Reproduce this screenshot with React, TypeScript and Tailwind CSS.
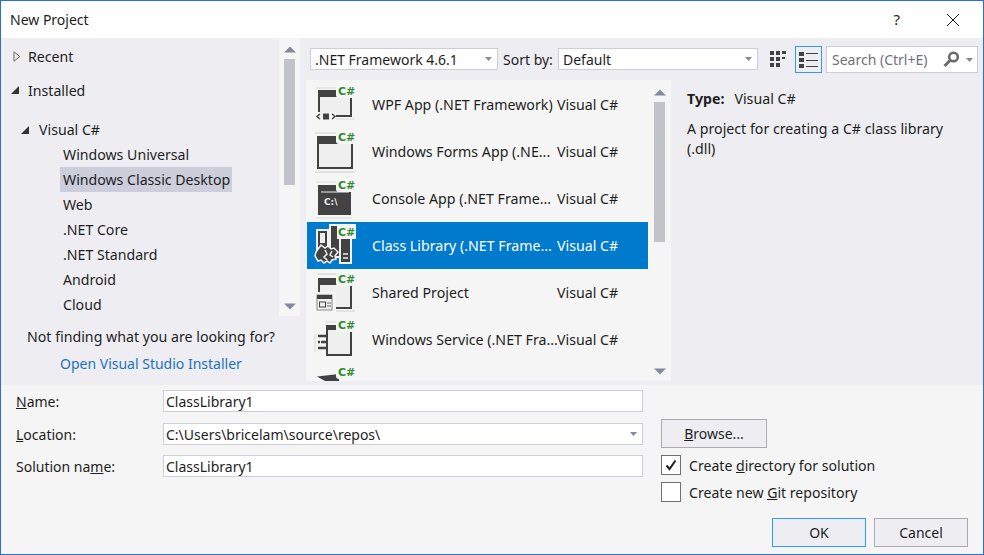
import React from "react";

const FONT = "font-['Noto_Sans','Open_Sans',sans-serif]";

function CSharp({ y = 13, x = 25 }: { y?: number; x?: number }) {
  return (
    <>
      <rect x={x - 2} y={y - 12} width="19" height="14" rx="3" fill="#f5f5f5" />
      <text x={x} y={y - 1} fontFamily="'DejaVu Sans',sans-serif" fontWeight="700" fontSize="11" fill="#2f8a2f">
        C#
      </text>
    </>
  );
}

function WpfIcon() {
  return (
    <svg width="44" height="44" viewBox="0 0 44 44" className="shrink-0">
      <path d="M3 5h22M8 36h34" stroke="#d8d8d8" fill="none" />
      <rect x="6" y="8" width="32" height="25" fill="#efefef" stroke="#424242" strokeWidth="2" />
      <rect x="5" y="7" width="23" height="7" fill="#424242" />
      <rect x="3" y="29" width="20" height="9" fill="#f5f5f5" />
      <path d="M7 31l-3 2.500 3 2.500M19 31l3 2.500-3 2.500" stroke="#424242" strokeWidth="1.500" fill="none" />
      <rect x="10" y="30.500" width="6" height="6" fill="#424242" />
      <CSharp />
    </svg>
  );
}

function FormsIcon() {
  return (
    <svg width="44" height="44" viewBox="0 0 44 44" className="shrink-0">
      <path d="M2 3h24M2 42h40" stroke="#d0d0d0" fill="none" />
      <rect x="5" y="7" width="34" height="31" fill="#efefef" stroke="#424242" strokeWidth="2" />
      <rect x="4" y="6" width="24" height="8" fill="#424242" />
      <CSharp y={12} />
    </svg>
  );
}

function ConsoleIcon() {
  return (
    <svg width="44" height="44" viewBox="0 0 44 44" className="shrink-0">
      <path d="M3 5h24M3 41h36" stroke="#dcdcdc" fill="none" />
      <rect x="5" y="8" width="33" height="30" fill="#424242" />
      <path d="M8 15h28" stroke="#efefef" />
      <text x="11" y="28" fontFamily="'DejaVu Sans',sans-serif" fontWeight="700" fontSize="9" fill="#efefef">
        C:\
      </text>
      <CSharp />
    </svg>
  );
}

function ClassIcon() {
  return (
    <svg width="44" height="44" viewBox="0 0 44 44" className="shrink-0">
      <rect x="3" y="5" width="13" height="26" fill="#f2f2f2" />
      <rect x="5" y="7" width="9" height="22" fill="#424242" />
      <rect x="7" y="9" width="5" height="10" fill="#efefef" />
      <rect x="16" y="0" width="12" height="34" fill="#f2f2f2" />
      <rect x="18" y="2" width="8" height="30" fill="#424242" />
      <rect x="26" y="7" width="13" height="33" fill="#f2f2f2" />
      <rect x="28" y="9" width="9" height="29" fill="#424242" />
      <path d="M30 30h5M30 34h5" stroke="#efefef" strokeWidth="1.500" />
      <path
        d="M3 28l5-7 4 3 3-2 3 3 3-1 4 4-3 4 1 3-4 1-2 3-3-2-3 2-3-3-3 1-3-5z"
        fill="#424242"
        stroke="#f2f2f2"
        strokeWidth="1.500"
      />
      <path d="M12 26l2 4-3 3 3 3M19 27l-2 4 3 2" stroke="#f2f2f2" strokeWidth="1.500" fill="none" />
      <rect x="24" y="0" width="19" height="15" fill="#f5f5f5" />
      <text x="25" y="12" fontFamily="'DejaVu Sans',sans-serif" fontWeight="700" fontSize="11" fill="#2f8a2f">
        C#
      </text>
    </svg>
  );
}

function SharedIcon() {
  return (
    <svg width="44" height="44" viewBox="0 0 44 44" className="shrink-0">
      <path d="M4 3h22M4 40h38" stroke="#d0d0d0" fill="none" />
      <rect x="6" y="8" width="32" height="29" fill="#efefef" stroke="#424242" strokeWidth="2" />
      <rect x="5" y="7" width="24" height="7" fill="#424242" />
      <rect x="2" y="21" width="21" height="20" fill="#f5f5f5" />
      <rect x="4" y="24" width="15" height="15" fill="#efefef" stroke="#8a8a8a" />
      <rect x="4" y="24" width="15" height="4" fill="#424242" />
      <rect x="6.500" y="31" width="6" height="5" fill="none" stroke="#424242" />
      <path d="M14 32h4M14 35h4" stroke="#6a6a6a" />
      <CSharp />
    </svg>
  );
}

function ServiceIcon() {
  return (
    <svg width="44" height="44" viewBox="0 0 44 44" className="shrink-0">
      <path d="M12 4h18M2 16v18" stroke="#d8d8d8" fill="none" />
      <rect x="14" y="8" width="24" height="29" fill="#efefef" stroke="#424242" strokeWidth="2" />
      <rect x="13" y="7" width="17" height="5" fill="#424242" />
      <path d="M5 18h8M5 24h2M8 24h5M5 30h8" stroke="#424242" strokeWidth="2.500" />
      <CSharp y={12} />
    </svg>
  );
}

function LastIcon() {
  return (
    <svg width="44" height="44" viewBox="0 0 44 44" className="shrink-0">
      <path d="M4 11.500L26 9v7H12z" fill="#424242" />
      <CSharp y={12} />
    </svg>
  );
}

const templates: [string, React.ReactNode][] = [
  ["WPF App (.NET Framework)", <WpfIcon />],
  ["Windows Forms App (.NE...", <FormsIcon />],
  ["Console App (.NET Frame...", <ConsoleIcon />],
  ["Class Library (.NET Frame...", <ClassIcon />],
  ["Shared Project", <SharedIcon />],
  ["Windows Service (.NET Fra...", <ServiceIcon />],
  ["", <LastIcon />],
];

const children = ["Windows Universal", "Windows Classic Desktop", "Web", ".NET Core", ".NET Standard", "Android", "Cloud"];

function Caret() {
  return (
    <svg width="7" height="4" viewBox="0 0 7 4" className="shrink-0">
      <path d="M0 0h7L3.500 4z" fill="#868999" />
    </svg>
  );
}

function ScrollBar({ thumbH, className }: { thumbH: string; className: string }) {
  return (
    <div className={`flex flex-col items-center ${className}`}>
      <svg width="12" height="7" viewBox="0 0 12 7" className="mt-[8px] shrink-0">
        <path d="M0 6.500h12L6 0.500z" fill="#868999" />
      </svg>
      <div className={`mt-[6px] w-[11px] bg-[#c2c3c9] ${thumbH}`} />
      <div className="flex-1" />
      <svg width="12" height="7" viewBox="0 0 12 7" className="mb-[6px] shrink-0">
        <path d="M0 .5h12L6 6.500z" fill="#868999" />
      </svg>
    </div>
  );
}

function Field({ value, caret }: { value: string; caret?: boolean }) {
  return (
    <div className="flex h-[22px] w-[480px] items-center border border-[#cccedb] bg-white pl-[2px] pr-[5px] text-[14px] text-[#1e1e1e]">
      <span className="flex-1 whitespace-nowrap">{value}</span>
      {caret && <Caret />}
    </div>
  );
}

function FormRow({ children, field }: { children: React.ReactNode; field: React.ReactNode }) {
  return (
    <div className="flex h-[22px] items-center">
      <span className="w-[147px] whitespace-nowrap text-[14px] text-[#1e1e1e]">{children}</span>
      {field}
    </div>
  );
}

function Check({ checked, children }: { checked?: boolean; children: React.ReactNode }) {
  return (
    <div className="flex h-[20px] items-center gap-[8px] text-[14.1px] text-[#1e1e1e]">
      <span className="flex h-[20px] w-[20px] items-center justify-center border border-[#707070] bg-white">
        {checked && (
          <svg width="12" height="12" viewBox="0 0 12 12">
            <path d="M1.500 6.500L4.500 10 10.500 1.500" stroke="#1e1e1e" strokeWidth="2" fill="none" />
          </svg>
        )}
      </span>
      <span className="whitespace-nowrap pt-[2px]">{children}</span>
    </div>
  );
}

export default function App() {
  return (
    <div className={`flex h-[555px] w-[984px] flex-col overflow-hidden border border-[#2b6fd6] bg-[#f5f5f5] text-[#1e1e1e] ${FONT}`}>
      {/* Title bar */}
      <div className="flex h-[37px] shrink-0 items-center bg-white pl-[9px] text-[14px]">
        <span className="flex-1">New Project</span>
        <span className="mr-[46px] text-[15px]">?</span>
        <svg width="14" height="14" viewBox="0 0 14 14" className="mr-[23px]">
          <path d="M1 1l12 12M13 1L1 13" stroke="#1e1e1e" strokeWidth="1" fill="none" />
        </svg>
      </div>

      {/* Main */}
      <div className="flex h-[347px] shrink-0 bg-[#eeeef2]">
        {/* Left */}
        <div className="flex w-[299px] shrink-0 flex-col">
          <div className="flex h-[279px] shrink-0">
            <div className="flex w-[278px] flex-col pt-[2px] text-[14.15px]">
              <div className="flex h-[34px] items-center">
                <svg width="8" height="11" viewBox="0 0 8 11" className="ml-[12px] mr-[7px] shrink-0">
                  <path d="M1 .8L6.800 5.500 1 10.200z" fill="none" stroke="#6a6a6a" />
                </svg>
                <span>Recent</span>
              </div>
              <div className="flex h-[34px] items-center">
                <svg width="8" height="8" viewBox="0 0 8 8" className="ml-[10px] mr-[9px] shrink-0">
                  <path d="M8 0v8H0z" fill="#333337" />
                </svg>
                <span>Installed</span>
              </div>
              <div className="mt-[10px] flex h-[25px] items-center">
                <svg width="8" height="8" viewBox="0 0 8 8" className="ml-[20px] mr-[10px] shrink-0">
                  <path d="M8 0v8H0z" fill="#333337" />
                </svg>
                <span>Visual C#</span>
              </div>
              {children.map((c) => (
                <div key={c} className="flex h-[25px] items-center pl-[59px]">
                  <span
                    className={`flex h-[25px] items-center whitespace-nowrap pl-[3px] pr-[2px] ${
                      c === "Windows Classic Desktop" ? "bg-[#cccedb]" : ""
                    }`}
                  >
                    {c}
                  </span>
                </div>
              ))}
            </div>
            <ScrollBar className="h-[278px] w-[21px] bg-[#f5f5f5]" thumbH="h-[126px]" />
          </div>
          <div className="pl-[26px] pt-[9px] text-[14.2px]">Not finding what you are looking for?</div>
          <div className="pl-[59px] pt-[6px] text-[14px] text-[#1b72c0]">Open Visual Studio Installer</div>
        </div>

        {/* Center & right */}
        <div className="flex min-w-0 flex-1 flex-col pl-[6px]">
          <div className="flex h-[42px] shrink-0 items-start pl-[4px] pt-[8px] text-[14px]">
            <div className="mt-[2px] flex h-[22px] w-[188px] items-center border border-[#cccedb] bg-white pl-[4px] pr-[5px]">
              <span className="flex-1 whitespace-nowrap">.NET Framework 4.6.1</span>
              <Caret />
            </div>
            <span className="ml-[5px] mt-[2px] flex h-[22px] w-[55px] items-center whitespace-nowrap">Sort by:</span>
            <div className="mt-[2px] flex h-[22px] w-[200px] items-center border border-[#cccedb] bg-white pl-[4px] pr-[5px]">
              <span className="flex-1">Default</span>
              <Caret />
            </div>
            <svg width="18" height="18" viewBox="0 0 18 18" className="ml-[11px] mt-[4px] shrink-0">
              <path
                d="M1 1h4v4H1zM7 1h4v4H7zM13 1h4v3h-4zM1 7h4v4H1zM7 7h4v4H7zM13 7h3v2h-3zM1 13h4v4H1zM7 13h4v4H7z"
                fill="#424242"
              />
            </svg>
            <div className="ml-[8px] flex h-[27px] w-[27px] shrink-0 items-center justify-center border border-[#3399ff]">
              <svg width="21" height="18" viewBox="0 0 21 18">
                <path d="M1 1h5v4H1zM1 7h5v4H1zM1 13h5v4H1z" fill="#424242" />
                <path d="M8 2.500h12M8 9.500h12M8 15.500h12" stroke="#424242" />
              </svg>
            </div>
            <div className="ml-[4px] flex h-[27px] w-[152px] shrink-0 items-center border border-[#cccedb] bg-white pl-[5px] pr-[4px]">
              <span className="flex-1 whitespace-nowrap text-[#71717a]">Search (Ctrl+E)</span>
              <svg width="17" height="17" viewBox="0 0 17 17" className="mr-[6px] shrink-0">
                <circle cx="10.500" cy="6" r="4.300" fill="none" stroke="#6a6a6a" strokeWidth="2.500" />
                <path d="M7 9.500L1.500 15" stroke="#6a6a6a" strokeWidth="3" />
              </svg>
              <Caret />
            </div>
          </div>

          <div className="flex min-h-0 flex-1">
            <div className="flex h-[301px] w-[365px] shrink-0 bg-[#f5f5f5] pl-[1px] pt-[1px]">
              <div className="h-[300px] w-[341px] shrink-0 overflow-hidden">
                {templates.map(([name, icon], i) => {
                  const selected = i === 3;
                  return (
                    <div
                      key={i}
                      className={`flex h-[47px] items-center pl-[6px] text-[14.2px] ${
                        selected ? "bg-[#007acc] text-white" : "text-[#1e1e1e]"
                      }`}
                    >
                      <span className="mt-[2px] shrink-0 self-start">{icon}</span>
                      <span className="ml-[15px] w-[185px] shrink-0 overflow-hidden whitespace-nowrap">{name}</span>
                      {name && <span className="whitespace-nowrap">Visual C#</span>}
                    </div>
                  );
                })}
              </div>
              <ScrollBar className="h-[300px] w-[23px]" thumbH="h-[140px]" />
            </div>
            <div className="min-w-0 flex-1 pl-[16px] pt-[8px] text-[14.2px]">
              <div className="flex h-[20px] items-center pt-[1px]">
                <span className="font-bold">Type:</span>
                <span className="ml-[10px]">Visual C#</span>
              </div>
              <div className="mt-[11px] w-[280px] leading-[20px]">A project for creating a C# class library (.dll)</div>
            </div>
          </div>
        </div>
      </div>

      {/* Bottom */}
      <div className="flex min-h-0 flex-1 pl-[15px]">
        <div className="flex shrink-0 flex-col pt-[5px]">
          <FormRow field={<Field value="ClassLibrary1" />}>
            <u>N</u>ame:
          </FormRow>
          <div className="mt-[11px]">
            <FormRow field={<Field value="C:\Users\bricelam\source\repos\" caret />}>
              <u>L</u>ocation:
            </FormRow>
          </div>
          <div className="mt-[10px]">
            <FormRow field={<Field value="ClassLibrary1" />}>
              Solution na<u>m</u>e:
            </FormRow>
          </div>
        </div>
        <div className="ml-[18px] flex w-[307px] shrink-0 flex-col pt-[34px]">
          <div className="flex h-[29px] w-[106px] items-center justify-center border border-[#acacac] bg-[#eeeef2] text-[14px]">
            <span>
              <u>B</u>rowse...
            </span>
          </div>
          <div className="mt-[7px]">
            <Check checked>
              Create <u>d</u>irectory for solution
            </Check>
          </div>
          <div className="mt-[7px]">
            <Check>
              Create new <u>G</u>it repository
            </Check>
          </div>
          <div className="mt-[16px] flex justify-end gap-[8px] text-[14px]">
            <div className="flex h-[29px] w-[94px] items-center justify-center border border-[#3399ff] bg-[#eeeef2]">OK</div>
            <div className="flex h-[29px] w-[94px] items-center justify-center border border-[#acacac] bg-[#eeeef2]">Cancel</div>
          </div>
        </div>
      </div>
    </div>
  );
}
